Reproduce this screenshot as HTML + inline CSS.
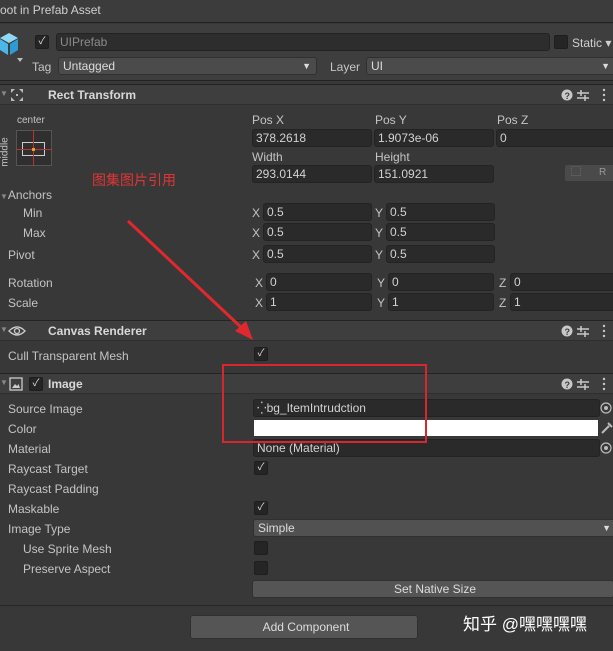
<!DOCTYPE html>
<html><head><style>
*{margin:0;padding:0;box-sizing:border-box}
body{width:613px;height:651px;background:#383838;font-family:"Liberation Sans","Noto Sans CJK SC",sans-serif;font-size:12px;color:#c4c4c4;position:relative;overflow:hidden}
div{position:absolute}
.t{white-space:nowrap;line-height:14px}
.f{background:#2a2a2a;border:1px solid #232323;border-radius:3px;height:18px;padding-left:3px;line-height:16px;color:#d2d2d2;white-space:nowrap}
.dd{background:#515151;border:1px solid #303030;border-radius:3px;height:18px;padding-left:4px;line-height:16px;color:#dcdcdc}
.hdr{left:0;width:613px;height:21px;background:#3e3e3e;border-top:1px solid #232323;border-bottom:1px solid #2e2e2e}
.hdr b{position:absolute;top:3px;font-size:12px;color:#d8d8d8}
.cb{width:14px;height:14px;background:#252525;border:1px solid #1e1e1e;border-radius:2px;color:#e0e0e0;font-size:10px;line-height:12px;text-align:center}
.ics{position:absolute;left:561px;top:3px}
</style></head><body>
<div style="left:0;top:0;width:613px;height:23px;background:#3c3c3c;border-bottom:1px solid #232323"></div>
<div class="t" style="left:0;top:3px;color:#cfcfcf">oot in Prefab Asset</div>
<div style="left:0;top:24px;width:613px;height:57px;background:#3e3e3e;border-bottom:1px solid #232323"></div>
<svg style="position:absolute;left:0;top:33px" width="26" height="30"><polygon points="0,5 9,0 18,5 9,10" fill="#8fd8f5"/><polygon points="0,6 8,11 8,22 0,17" fill="#4cb6e8"/><polygon points="10,11 18,6 18,17 10,22" fill="#2f9bd4"/><polygon points="17,25 23,25 20,29" fill="#bbb"/></svg>
<div class="cb" style="left:35px;top:35px">✓</div>
<div class="f" style="left:56px;top:33px;width:494px;color:#8a8a8a;background:#2d2d2d">UIPrefab</div>
<div class="cb" style="left:554px;top:35px"></div>
<div class="t" style="left:572px;top:36px;color:#d0d0d0">Static ▾</div>
<div class="t" style="left:32px;top:60px">Tag</div>
<div class="dd" style="left:58px;top:57px;width:259px;background:#4b4b4b">Untagged<span style="position:absolute;right:5px;font-size:9px">▼</span></div>
<div class="t" style="left:330px;top:60px">Layer</div>
<div class="dd" style="left:366px;top:57px;width:250px;background:#4b4b4b">UI<span style="position:absolute;right:5px;font-size:9px">▼</span></div>

<div class="hdr" style="top:84px"><span style="position:absolute;left:0;top:4px;font-size:8px;color:#888">▼</span>
<svg style="position:absolute;left:10px;top:3px" width="14" height="14" fill="#bbb"><path d="M1 1h4L1 5zM13 1h-4l4 4zM1 13h4l-4-4zM13 13h-4l4-4z"/><rect x="6" y="6" width="2" height="2"/></svg>
<b style="left:48px">Rect Transform</b>
<svg class="ics" width="52" height="14"><circle cx="6" cy="7" r="5.5" fill="#c8c8c8"/><text x="3.5" y="11" font-size="9" font-weight="bold" fill="#3e3e3e" font-family="Liberation Sans">?</text><path d="M16 5h12M16 10h12M20 2v6M24 7v6" stroke="#c8c8c8" stroke-width="1.5"/><circle cx="43" cy="2" r="1.2" fill="#c8c8c8"/><circle cx="43" cy="7" r="1.2" fill="#c8c8c8"/><circle cx="43" cy="12" r="1.2" fill="#c8c8c8"/></svg></div>
<div class="t" style="left:17px;top:114px;font-size:10px">center</div>
<div class="t" style="left:-9px;top:145px;font-size:10px;transform:rotate(-90deg)">middle</div>
<div style="left:16px;top:130px;width:36px;height:36px;background:#2f2f2f;border:1px solid #555"></div>
<div style="left:22px;top:142px;width:23px;height:14px;border:1px solid #ccc"></div>
<div style="left:16px;top:149px;width:36px;height:1px;background:#b33"></div>
<div style="left:33px;top:130px;width:1px;height:36px;background:#b33"></div>
<div style="left:32px;top:148px;width:3px;height:3px;background:#e8a020"></div>
<div class="t" style="left:252px;top:113px">Pos X</div><div class="t" style="left:375px;top:113px">Pos Y</div><div class="t" style="left:497px;top:113px">Pos Z</div>
<div class="f" style="left:252px;top:129px;width:120px">378.2618</div><div class="f" style="left:374px;top:129px;width:120px">1.9073e-06</div><div class="f" style="left:496px;top:129px;width:120px">0</div>
<div class="t" style="left:252px;top:150px">Width</div><div class="t" style="left:375px;top:150px">Height</div>
<div class="f" style="left:252px;top:165px;width:120px">293.0144</div><div class="f" style="left:374px;top:165px;width:120px">151.0921</div>
<div style="left:565px;top:165px;width:50px;height:16px;background:#4a4a4a;border-radius:2px"></div><div class="t" style="left:571px;top:166px;font-size:10px;color:#999">⬚</div><div class="t" style="left:599px;top:166px;font-size:10px;color:#999">R</div>
<div class="t" style="left:92px;top:173px;color:#e03535;font-size:14px">图集图片引用</div>
<div class="t" style="left:0;top:188px"><span style="font-size:8px;color:#888">▼</span>Anchors</div>
<div class="t" style="left:23px;top:206px">Min</div><div class="t" style="left:23px;top:226px">Max</div>
<div class="t" style="left:8px;top:248px">Pivot</div><div class="t" style="left:8px;top:276px">Rotation</div><div class="t" style="left:8px;top:296px">Scale</div>
<div class="t" style="left:252px;top:206px">X</div><div class="f" style="left:263px;top:203px;width:109px">0.5</div><div class="t" style="left:375px;top:206px">Y</div><div class="f" style="left:386px;top:203px;width:109px">0.5</div>
<div class="t" style="left:252px;top:226px">X</div><div class="f" style="left:263px;top:223px;width:109px">0.5</div><div class="t" style="left:375px;top:226px">Y</div><div class="f" style="left:386px;top:223px;width:109px">0.5</div>
<div class="t" style="left:252px;top:248px">X</div><div class="f" style="left:263px;top:245px;width:109px">0.5</div><div class="t" style="left:375px;top:248px">Y</div><div class="f" style="left:386px;top:245px;width:109px">0.5</div>
<div class="t" style="left:255px;top:276px">X</div><div class="f" style="left:266px;top:273px;width:106px">0</div><div class="t" style="left:377px;top:276px">Y</div><div class="f" style="left:388px;top:273px;width:106px">0</div><div class="t" style="left:499px;top:276px">Z</div><div class="f" style="left:510px;top:273px;width:106px">0</div>
<div class="t" style="left:255px;top:296px">X</div><div class="f" style="left:266px;top:293px;width:106px">1</div><div class="t" style="left:377px;top:296px">Y</div><div class="f" style="left:388px;top:293px;width:106px">1</div><div class="t" style="left:499px;top:296px">Z</div><div class="f" style="left:510px;top:293px;width:106px">1</div>

<div class="hdr" style="top:320px"><span style="position:absolute;left:0;top:4px;font-size:8px;color:#888">▼</span>
<svg style="position:absolute;left:8px;top:3px" width="18" height="14"><path d="M1 7Q9 -1 17 7Q9 15 1 7z" fill="none" stroke="#ccc" stroke-width="1.3"/><circle cx="9" cy="7" r="2.5" fill="none" stroke="#ccc" stroke-width="1.3"/></svg>
<b style="left:48px">Canvas Renderer</b>
<svg class="ics" width="52" height="14"><circle cx="6" cy="7" r="5.5" fill="#c8c8c8"/><text x="3.5" y="11" font-size="9" font-weight="bold" fill="#3e3e3e" font-family="Liberation Sans">?</text><path d="M16 5h12M16 10h12M20 2v6M24 7v6" stroke="#c8c8c8" stroke-width="1.5"/><circle cx="43" cy="2" r="1.2" fill="#c8c8c8"/><circle cx="43" cy="7" r="1.2" fill="#c8c8c8"/><circle cx="43" cy="12" r="1.2" fill="#c8c8c8"/></svg></div>
<div class="t" style="left:8px;top:349px">Cull Transparent Mesh</div>
<div class="cb" style="left:254px;top:347px">✓</div>

<div class="hdr" style="top:373px"><span style="position:absolute;left:0;top:4px;font-size:8px;color:#888">▼</span>
<svg style="position:absolute;left:9px;top:3px" width="14" height="14"><rect x="1" y="1" width="12" height="12" fill="none" stroke="#ccc" stroke-width="1.3"/><path d="M3 11l3-4 2 2 1.5-2L11 11z" fill="#ccc"/></svg>
<div class="cb" style="left:29px;top:3px">✓</div><b style="left:48px">Image</b>
<svg class="ics" width="52" height="14"><circle cx="6" cy="7" r="5.5" fill="#c8c8c8"/><text x="3.5" y="11" font-size="9" font-weight="bold" fill="#3e3e3e" font-family="Liberation Sans">?</text><path d="M16 5h12M16 10h12M20 2v6M24 7v6" stroke="#c8c8c8" stroke-width="1.5"/><circle cx="43" cy="2" r="1.2" fill="#c8c8c8"/><circle cx="43" cy="7" r="1.2" fill="#c8c8c8"/><circle cx="43" cy="12" r="1.2" fill="#c8c8c8"/></svg></div>
<div class="t" style="left:8px;top:402px">Source Image</div><div class="t" style="left:8px;top:422px">Color</div><div class="t" style="left:8px;top:442px">Material</div><div class="t" style="left:8px;top:462px">Raycast Target</div><div class="t" style="left:8px;top:482px">Raycast Padding</div><div class="t" style="left:8px;top:502px">Maskable</div><div class="t" style="left:8px;top:522px">Image Type</div><div class="t" style="left:23px;top:542px">Use Sprite Mesh</div><div class="t" style="left:23px;top:562px">Preserve Aspect</div>
<div class="f" style="left:253px;top:399px;width:347px">⁛bg_ItemIntrudction</div>
<svg style="position:absolute;left:600px;top:402px" width="13" height="13"><circle cx="6" cy="6" r="5" fill="none" stroke="#bbb" stroke-width="1.2"/><circle cx="6" cy="6" r="2" fill="#bbb"/></svg>
<div style="left:254px;top:420px;width:344px;height:16px;background:#fff"></div>
<svg style="position:absolute;left:600px;top:421px" width="13" height="14"><path d="M2 12L9 5M8 2l4 4" stroke="#bbb" stroke-width="2"/></svg>
<div class="f" style="left:253px;top:439px;width:347px">None (Material)</div>
<svg style="position:absolute;left:600px;top:442px" width="13" height="13"><circle cx="6" cy="6" r="5" fill="none" stroke="#bbb" stroke-width="1.2"/><circle cx="6" cy="6" r="2" fill="#bbb"/></svg>
<div class="cb" style="left:254px;top:461px">✓</div><div class="cb" style="left:254px;top:501px">✓</div>
<div class="dd" style="left:253px;top:519px;width:362px">Simple<span style="position:absolute;right:3px;font-size:9px">▼</span></div>
<div class="cb" style="left:254px;top:541px"></div><div class="cb" style="left:254px;top:561px"></div>
<div class="dd" style="left:252px;top:580px;width:362px;text-align:center;background:#555">Set Native Size</div>
<div style="left:0;top:605px;width:613px;height:1px;background:#262626"></div>
<div class="dd" style="left:190px;top:615px;width:228px;height:24px;line-height:22px;text-align:center;background:#555">Add Component</div>
<div class="t" style="left:463px;top:614px;font-size:17px;line-height:22px;color:#fff">知乎 @嘿嘿嘿嘿</div>
<div style="left:222px;top:364px;width:205px;height:79px;border:2px solid #d8262e"></div>
<svg style="position:absolute;left:0;top:0" width="613" height="651"><line x1="128" y1="221" x2="244" y2="330" stroke="#e0282e" stroke-width="3"/><polygon points="253,340 235,331 246,321" fill="#e0282e"/></svg>
</body></html>
